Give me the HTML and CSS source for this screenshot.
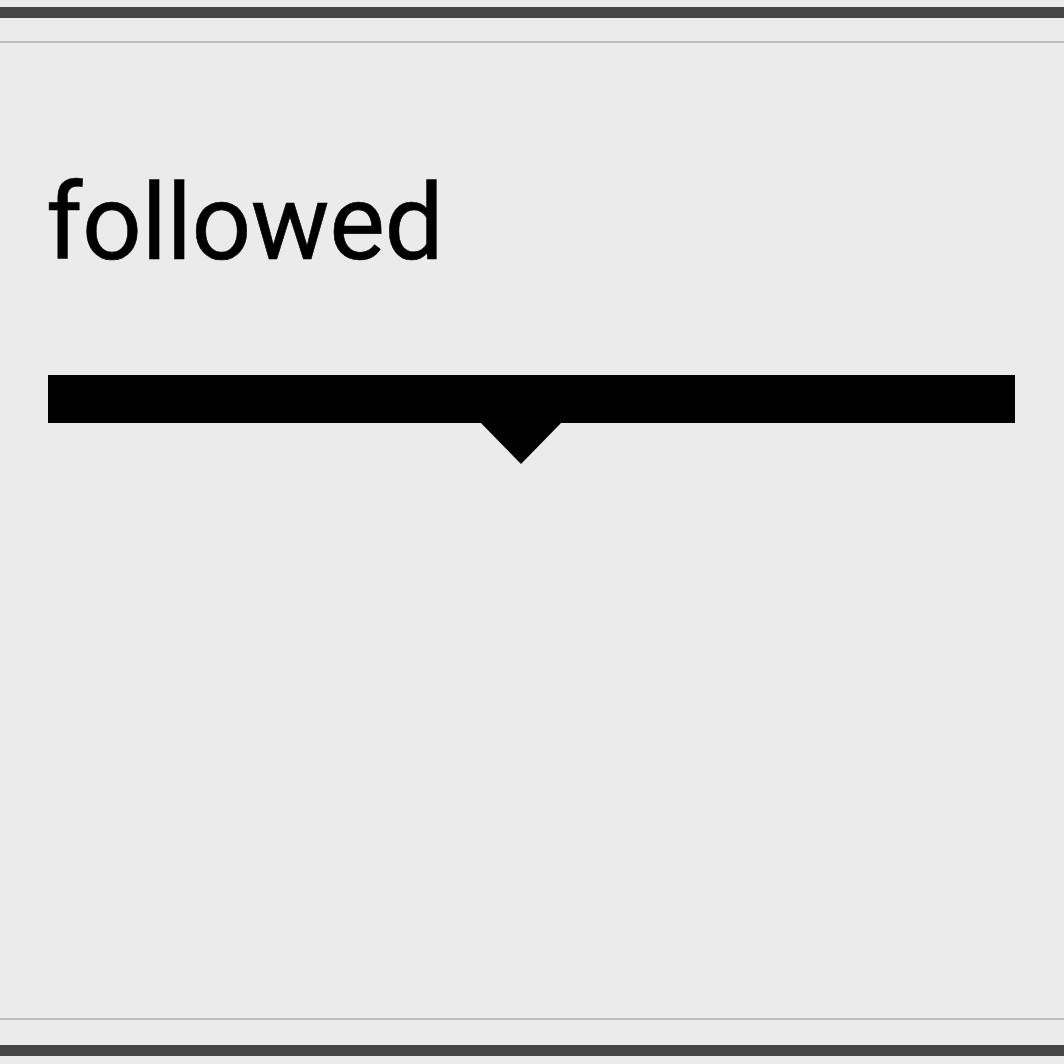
FILE: index.html
```html
<!DOCTYPE html>
<html lang="en">
<head>
<meta charset="utf-8">
<title>followed</title>
<link rel="stylesheet" href="styles.css">
</head>
<body>
<div class="frame">
  <div class="rule-dark"></div>
  <div class="rule-light"></div>
  <main class="panel">
    <h1 class="word">followed</h1>
    <div class="slider">
      <div class="track"></div>
      <div class="pointer"></div>
    </div>
  </main>
  <div class="rule-light"></div>
  <div class="rule-dark"></div>
</div>
</body>
</html>
```
FILE: styles.css
```css
html, body {
  margin: 0;
  padding: 0;
  background: #ebebeb;
}

.frame {
  height: 1064px;
  box-sizing: border-box;
  padding: 7px 0 8px;
  display: flex;
  flex-direction: column;
}

.rule-dark {
  height: 11px;
  background: #464646;
  flex: none;
}

.rule-light {
  height: 2px;
  background: #bcbcbc;
  flex: none;
  margin: 24px 0;
}

.frame > .rule-dark:first-child + .rule-light {
  margin-top: 23px;
  margin-bottom: 0;
}

.panel + .rule-light {
  margin-top: 0;
  margin-bottom: 25px;
}

.panel {
  flex: 1;
  padding: 0 49px 0 48px;
}

.word {
  margin: 0;
  padding-top: 128px;
  font-family: Roboto, "Noto Sans", sans-serif;
  font-weight: 400;
  font-size: 105px;
  line-height: 105px;
  color: #000;
  letter-spacing: -0.5px;
  margin-left: -2px;
  -webkit-text-stroke: 0.6px #000;
}

.slider {
  margin-top: 99px;
  position: relative;
}

.track {
  height: 48px;
  background: #000;
}

.pointer {
  position: absolute;
  left: 432px;
  top: 47px;
  width: 0;
  height: 0;
  border-left: 41px solid transparent;
  border-right: 41px solid transparent;
  border-top: 42px solid #000;
}
```
